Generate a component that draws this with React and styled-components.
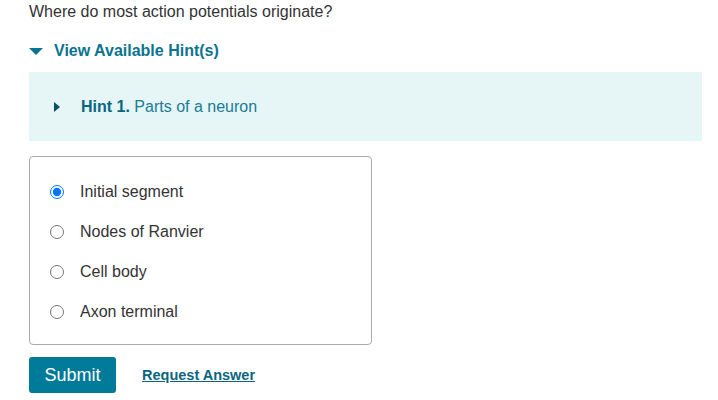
import React from 'react'
import styled, { createGlobalStyle } from 'styled-components'

const GlobalStyle = createGlobalStyle`
body {
    margin: 0;
    background: #fff;
    font-family: "Liberation Sans", Arial, sans-serif;
    color: #333;
}
`

const options = ['Initial segment', 'Nodes of Ranvier', 'Cell body', 'Axon terminal']

function App() {
    return (
        <Page>
            <GlobalStyle />
            <Question>Where do most action potentials originate?</Question>
            <HintToggle>
                <Caret dir="down" />
                View Available Hint(s)
            </HintToggle>
            <HintBox>
                <Caret dir="right" />
                <HintText><b>Hint 1.</b> Parts of a neuron</HintText>
            </HintBox>
            <Card>
                {options.map((opt, i) => (
                    <Option key={opt}>
                        <Radio type="radio" name="answer" defaultChecked={i === 0} />
                        {opt}
                    </Option>
                ))}
            </Card>
            <Actions>
                <Submit>Submit</Submit>
                <RequestLink href="#">Request Answer</RequestLink>
            </Actions>
        </Page>
    )
}

export default App

const Page = styled.div`
padding: 0 16px 0 29px;
`

const Question = styled.p`
margin: 0;
font-size: 16px;
line-height: 24px;
color: #333;
`

const HintToggle = styled.div`
display: flex;
align-items: center;
gap: 11px;
margin-top: 15px;
height: 24px;
font-size: 16px;
font-weight: bold;
color: #0b7390;
`

const Caret = styled.span`
width: 0;
height: 0;
${p => p.dir === 'down'
    ? `border-left: 7px solid transparent;
       border-right: 7px solid transparent;
       border-top: 7px solid #0b7390;`
    : `border-top: 5px solid transparent;
       border-bottom: 5px solid transparent;
       border-left: 6px solid #0b4f66;`}
`

const HintBox = styled.div`
display: flex;
align-items: center;
gap: 21px;
margin-top: 9px;
height: 69px;
padding-left: 25px;
background: #e6f5f6;
`

const HintText = styled.span`
font-size: 16px;
color: #1a7c95;

b {
    color: #0b6580;
}
`

const Card = styled.div`
width: 343px;
box-sizing: border-box;
margin-top: 15px;
border: 1px solid #aaa;
border-radius: 4px;
padding: 15px 20px 12px;
`

const Option = styled.label`
display: flex;
align-items: center;
height: 40px;
gap: 16px;
font-size: 16px;
color: #333;
`

const Radio = styled.input`
margin: 0;
width: 14px;
height: 14px;
`

const Actions = styled.div`
display: flex;
align-items: center;
gap: 26px;
margin-top: 12px;
`

const Submit = styled.button`
border: none;
border-radius: 3px;
background: #007a99;
color: #fff;
font-family: "Liberation Sans", Arial, sans-serif;
font-size: 18px;
width: 87px;
height: 36px;
padding: 0;
`

const RequestLink = styled.a`
font-size: 14.5px;
font-weight: bold;
color: #0b6580;
text-decoration: underline;
`
